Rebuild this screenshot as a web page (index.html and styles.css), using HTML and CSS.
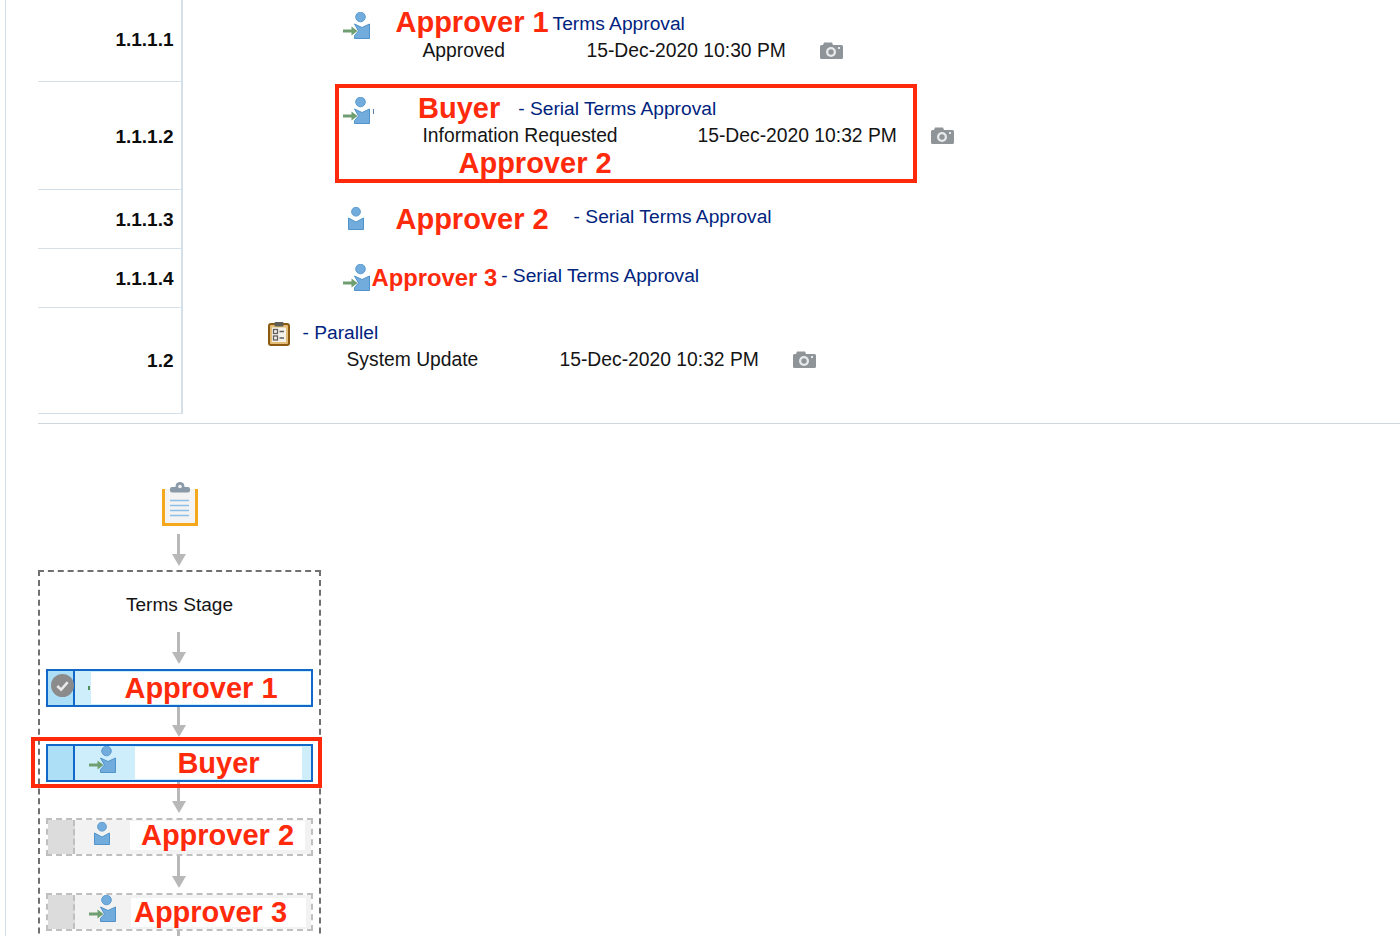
FILE: index.html
```html
<!DOCTYPE html>
<html lang="en">
<head>
<meta charset="utf-8">
<title>Approval history</title>
<link rel="stylesheet" href="styles.css">
</head>
<body>
<svg class="defs" width="0" height="0" aria-hidden="true">
  <symbol id="i-assign" viewBox="0 0 27 27">
    <circle cx="17.5" cy="5" r="4.800" fill="#72acdd" stroke="#5b9bd0"/>
    <path d="M11.500 12 L19 15.500 L26.500 12 V26.500 H11.500 V23.500 L15.500 19 Z" fill="#72acdd" stroke="#5093ca"/>
    <path d="M0 19 H10" stroke="#6f9f70" stroke-width="3"/>
    <path d="M8.500 14.500 L14.500 19 L8.500 23.500 Z" fill="#6f9f70"/>
  </symbol>
  <symbol id="i-person" viewBox="0 0 16 23">
    <circle cx="8" cy="4.700" r="4.400" fill="#72acdd" stroke="#5b9bd0"/>
    <path d="M.5 11 L8 15 L15.500 11 V22.500 H.5 Z" fill="#72acdd" stroke="#5093ca"/>
  </symbol>
  <symbol id="i-camera" viewBox="0 0 23 17">
    <path d="M1.500 3 H3 L4 0.500 H12 L13 3 H21.500 A1.500 1.500 0 0 1 23 4.500 V15.500 A1.500 1.500 0 0 1 21.500 17 H1.500 A1.500 1.500 0 0 1 0 15.500 V4.500 A1.500 1.500 0 0 1 1.500 3 Z" fill="#8f9499"/>
    <circle cx="11" cy="10" r="5" fill="#e8eaeb"/>
    <circle cx="11" cy="10" r="2.700" fill="#8f9499"/>
    <rect x="18" y="5" width="2" height="2" fill="#e8eaeb"/>
  </symbol>
</svg>

<main class="page">
  <section class="table">
    <div class="row row-a">
      <div class="num num-raised">1.1.1.1</div>
      <div class="cell">
        <div class="title-line">
          <svg class="icon-assign"><use href="#i-assign"/></svg>
          <span class="who who-first">Approver 1</span>
          <span class="step step-tight">Terms Approval</span>
        </div>
        <div class="detail-line detail-step">
          <span class="status status-a">Approved</span>
          <span class="date">15-Dec-2020 10:30 PM</span>
          <svg class="icon-camera"><use href="#i-camera"/></svg>
        </div>
      </div>
    </div>

    <div class="row row-b">
      <div class="num">1.1.1.2</div>
      <div class="cell">
        <div class="highlight highlight-row"></div>
        <div class="title-line">
          <svg class="icon-assign"><use href="#i-assign"/></svg>
          <span class="tick"></span>
          <span class="who who-buyer">Buyer</span>
          <span class="step step-buyer">- Serial Terms Approval</span>
        </div>
        <div class="detail-line detail-step">
          <span class="status status-b">Information Requested</span>
          <span class="date">15-Dec-2020 10:32 PM</span>
          <svg class="icon-camera"><use href="#i-camera"/></svg>
        </div>
        <div class="who who-note">Approver 2</div>
      </div>
    </div>

    <div class="row row-c">
      <div class="num">1.1.1.3</div>
      <div class="cell">
        <div class="title-line">
          <span class="icon-slot"><svg class="icon-person"><use href="#i-person"/></svg></span>
          <span class="who who-first">Approver 2</span>
          <span class="step step-wide">- Serial Terms Approval</span>
        </div>
      </div>
    </div>

    <div class="row row-c">
      <div class="num">1.1.1.4</div>
      <div class="cell">
        <div class="title-line">
          <svg class="icon-assign"><use href="#i-assign"/></svg>
          <span class="who who-small">Approver 3</span>
          <span class="step step-tight">- Serial Terms Approval</span>
        </div>
      </div>
    </div>

    <div class="row row-d">
      <div class="num">1.2</div>
      <div class="cell cell-parallel">
        <div class="title-line title-parallel">
          <svg class="icon-tasks" viewBox="0 0 22 25">
            <rect x="1" y="3" width="20" height="21" rx="2" fill="#e3bd78" stroke="#8a5a10" stroke-width="2"/>
            <rect x="4" y="6.500" width="14" height="14.500" fill="#f4f1e8"/>
            <rect x="6.500" y="1" width="9" height="4.500" rx="1" fill="#5f5c54"/>
            <rect x="5.500" y="8.500" width="4" height="4" fill="none" stroke="#5e5e5e" stroke-width="1.300"/>
            <rect x="5.500" y="15" width="4" height="4" fill="none" stroke="#5e5e5e" stroke-width="1.300"/>
            <path d="M11.500 10.500 H16 M11.500 17 H16" stroke="#5e5e5e" stroke-width="1.400"/>
          </svg>
          <span class="step step-parallel">- Parallel</span>
        </div>
        <div class="detail-line detail-parallel">
          <span class="status status-c">System Update</span>
          <span class="date">15-Dec-2020 10:32 PM</span>
          <svg class="icon-camera"><use href="#i-camera"/></svg>
        </div>
      </div>
    </div>
  </section>

  <hr class="rule">

  <section class="chart">
    <svg class="icon-start" viewBox="0 0 36 44">
      <rect x="3" y="7" width="30" height="35" fill="#f3f3f3"/>
      <path d="M1.500 7 V42.500 H34.500 V7" fill="none" stroke="#f5a81c" stroke-width="3"/>
      <rect x="8" y="5" width="20" height="5.500" rx="2" fill="#8a9aa8"/>
      <circle cx="18" cy="4.500" r="4.500" fill="#8a9aa8"/>
      <circle cx="18" cy="4.500" r="1.800" fill="#f3f3f3"/>
      <path d="M8 18.500 H27 M8 23.500 H27 M8 28.500 H27 M8 33.500 H27" stroke="#8cc0e8" stroke-width="1.600"/>
    </svg>
    <div class="arrow arrow-start"></div>
    <div class="stage">
      <div class="stage-name">Terms Stage</div>
      <div class="arrow arrow-stage"></div>
      <div class="node node-active">
        <div class="node-status"><svg class="icon-check" viewBox="0 0 22 22"><circle cx="11" cy="11" r="11" fill="#8b8b8b"/><path d="M6 11.500 L9.700 15 L16 7.800" fill="none" stroke="#e9e9e9" stroke-width="2.400"/></svg></div>
        <div class="node-main">
          <span class="sliver"></span>
          <div class="node-label label-full">Approver 1</div>
        </div>
      </div>
      <div class="arrow arrow-a"></div>
      <div class="node node-active node-flagged">
        <div class="node-status"></div>
        <div class="node-main">
          <svg class="icon-assign icon-in-node"><use href="#i-assign"/></svg>
          <div class="node-label label-buyer">Buyer</div>
        </div>
        <div class="highlight highlight-node"></div>
      </div>
      <div class="arrow arrow-b"></div>
      <div class="node node-pending">
        <div class="node-status"></div>
        <div class="node-main">
          <svg class="icon-person icon-person-node"><use href="#i-person"/></svg>
          <div class="node-label label-pending label-raised">Approver 2</div>
        </div>
      </div>
      <div class="arrow arrow-c"></div>
      <div class="node node-pending">
        <div class="node-status"></div>
        <div class="node-main">
          <svg class="icon-assign icon-in-node"><use href="#i-assign"/></svg>
          <div class="node-label label-pending label-shift">Approver 3</div>
        </div>
      </div>
      <div class="arrow arrow-d"></div>
    </div>
  </section>
</main>
</body>
</html>
```
FILE: styles.css
```css
* { box-sizing: border-box; }
html, body { margin: 0; height: 936px; overflow: hidden; background: #fff; }
body { font-family: "Liberation Sans", Arial, sans-serif; color: #141414; }
.defs { position: absolute; }

.page {
  margin-left: 5px;
  height: 936px;
  padding-left: 32px;
  border-left: 1.5px solid #d6e0e8;
}

/* table */
.row { display: grid; grid-template-columns: 144.500px 1fr; }
.row-a { height: 82px; }
.row-b { height: 108px; }
.row-c { height: 59px; }
.row-d { height: 106px; }
.num {
  display: flex; align-items: center; justify-content: flex-end;
  padding: 2px 7px 0 0;
  border-right: 2px solid #d6e0e8;
  border-bottom: 1.500px solid #d6e0e8;
  font-size: 19px; font-weight: 700; color: #0c0c0c;
}
.num-raised { padding: 0 7px 2px 0; }
.row-d .num { padding-top: 0; }
.cell { position: relative; padding-left: 160px; }
.row-a .cell { padding-top: 7px; }
.row-b .cell { padding-top: 10px; }
.row-c .cell { padding-top: 10px; }
.cell-parallel { padding-left: 85px; padding-top: 9px; }

.title-line { display: flex; align-items: center; height: 32px; }
.detail-line { display: flex; align-items: center; height: 24px; font-size: 19.300px; }
.detail-step { margin-left: 80px; }
.detail-parallel { margin-left: 79px; margin-top: 1px; }
.title-parallel { height: 30px; }

.status-a { width: 164px; }
.status-b { width: 275px; }
.status-c { width: 213px; }
.date { white-space: nowrap; }
.icon-camera { width: 23px; height: 17px; margin: -2px 0 0 34px; }

.who { color: #ff2a0c; font-weight: 700; font-size: 29px; white-space: nowrap; }
.who-first { margin-left: 26px; }
.row-a .who-first { margin-top: -2px; }
.row-c .who { margin-top: 6px; }
.who-buyer { margin-left: 44px; }
.row-c .who-small { font-size: 23.800px; margin-left: 2px; }
.who-note { margin: -1px 0 0 116px; line-height: 32px; }

.step { color: #00237e; font-size: 19.200px; white-space: nowrap; margin-top: 2px; }
.step-tight { margin-left: 4px; }
.step-buyer { margin-left: 18px; }
.step-wide { margin-left: 25px; }
.step-parallel { margin-left: 13px; }

.icon-assign { width: 27px; height: 27px; flex: none; margin-top: 4px; }
.icon-slot { width: 27px; display: flex; justify-content: center; margin-top: 4px; }
.icon-person { width: 16px; height: 23px; flex: none; }
.icon-tasks { width: 22px; height: 25px; flex: none; margin-top: 2px; }
.tick { width: 1.500px; height: 5px; margin: 6px 0 0 3px; background: #5b7fa8; }

.highlight { position: absolute; border: 4px solid #ff2a0c; pointer-events: none; }
.highlight-row { left: 152px; top: 2px; width: 582px; height: 99px; }
.highlight-node { left: -17px; right: -11px; top: -9px; bottom: -8px; }

.rule { margin: 9px 0 0; border: 0; border-top: 1px solid #cfd8df; }

/* flow chart */
.chart { width: 283px; margin-top: 58px; display: flex; flex-direction: column; align-items: center; }
.icon-start { width: 36px; height: 44px; flex: none; }
.arrow { width: 14px; margin-left: -2px; display: flex; flex-direction: column; align-items: center; flex: none; }
.arrow::before { content: ""; flex: 1; width: 2.500px; background: #b8b8b8; }
.arrow::after {
  content: ""; width: 0; height: 0;
  border-left: 7px solid transparent; border-right: 7px solid transparent;
  border-top: 12px solid #b8b8b8;
}
.arrow-start { height: 32px; margin-top: 8px; margin-bottom: 4px; }
.arrow-stage { height: 32px; margin-top: 15px; margin-bottom: 5px; }
.arrow-a { height: 30px; margin-bottom: 7px; }
.arrow-b { height: 31px; margin-bottom: 5px; }
.arrow-c { height: 32px; margin-bottom: 5px; }
.arrow-d { height: 30px; }

.stage {
  width: 283px; flex: none;
  padding: 21px 6px 30px;
  border: 2px dashed #707070;
  display: flex; flex-direction: column; align-items: center;
}
.stage-name { font-size: 19.100px; line-height: 24px; text-align: center; }

.node { position: relative; width: 267px; height: 38px; display: flex; flex: none; border: 2px solid #1268c8; }
.node-status { width: 27px; flex: none; display: flex; align-items: center; justify-content: center; background: #addff6; border-right: 2px solid #1268c8; }
.node-main { flex: 1; display: flex; align-items: center; background: #cfeefb; position: relative; }
.node-pending { border: 2px dashed #bfbfbf; }
.node-pending .node-status { background: #dcdcdc; border-right: 2px dashed #bfbfbf; }
.node-pending .node-main { background: #f2f2f2; }

.node-label {
  display: flex; align-items: center; justify-content: center;
  background: #fff; color: #ff2a0c; font-weight: 700; font-size: 29px; white-space: nowrap;
}
.label-full { width: 220px; height: 32px; margin-left: 1px; }
.label-buyer { width: 167px; height: 32px; margin-left: 19px; }
.label-pending { width: 175px; height: 29px; }
.label-raised { margin-top: -4px; }
.icon-in-node { margin: -8px 0 0 14px; }
.icon-person-node { margin: -7px 0 0 19px; }
.node-pending .icon-in-node + .label-pending { margin-left: 15px; margin-top: 0; }
.node-pending .icon-person-node + .label-pending { margin-left: 20px; }
.label-shift { padding-right: 16px; }
.icon-check { width: 23px; height: 23px; flex: none; margin: -6px 0 0 4px; }
.sliver { width: 2px; height: 4px; margin-left: 13px; background: #4f8f55; }
```
